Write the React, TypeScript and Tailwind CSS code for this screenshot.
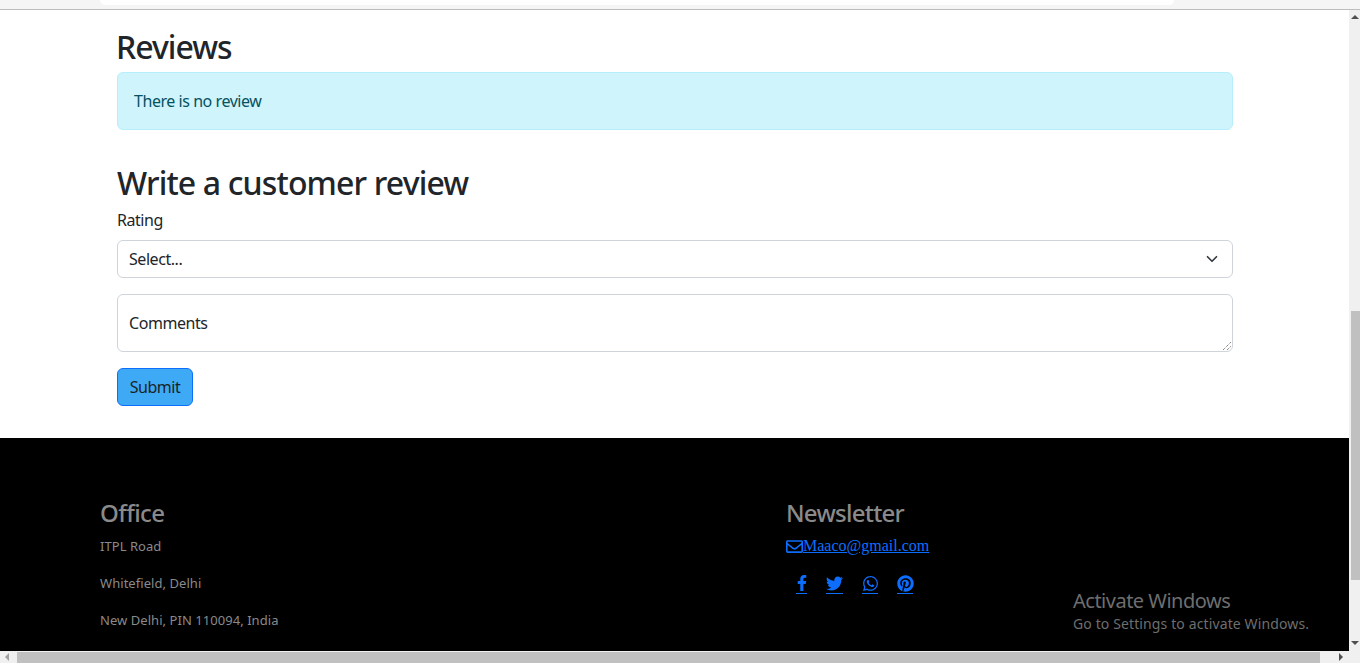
import React from "react"
import { ChevronDown } from "lucide-react"
import { FaFacebookF, FaPinterest, FaRegEnvelope, FaTwitter, FaWhatsapp } from "react-icons/fa"

const socials = [
    { icon: FaFacebookF, width: "w-[11px]", size: 16 },
    { icon: FaTwitter, width: "w-[17px]", size: 17 },
    { icon: FaWhatsapp, width: "w-[16px]", size: 17 },
    { icon: FaPinterest, width: "w-[16px]", size: 17 },
]

const BrowserBar = () => (
    <div className="h-[10px] shrink-0 bg-[#f5f5f5] border-b border-[#bdbdbd] pl-[100px] pr-[186px]">
        <div className="h-[5px] bg-white rounded-b-md" />
    </div>
)

const Reviews = () => (
    <div className="bg-white h-[428px] pl-[117px] pr-[116px] pt-[18px] text-[#212529] text-base tracking-[-0.45px]">
        <h2 className="text-[32px] leading-[38px] font-medium tracking-[-1px] -ml-px">Reviews</h2>
        <div className="mt-[6px] h-[58px] flex items-center px-4 bg-[#cff4fc] border border-[#b6effb] rounded-md text-[#055160]">
            There is no review
        </div>
        <h2 className="mt-[34px] text-[32px] leading-[38px] font-medium tracking-[-0.85px]">Write a customer review</h2>
        <div className="mt-[6px] leading-6">Rating</div>
        <div className="mt-2 h-[38px] flex items-center justify-between pl-[11px] pr-[11px] border border-[#ced4da] rounded-md">
            <span>Select...</span>
            <ChevronDown className="w-[18px] h-[18px] text-[#343a40]" strokeWidth={2.25} />
        </div>
        <div className="relative mt-4 h-[58px] flex items-center px-[11px] border border-[#ced4da] rounded-md">
            <span>Comments</span>
            <svg className="absolute right-0 bottom-0" width="10" height="10" viewBox="0 0 10 10">
                <path d="M1 9 9 1M5 9 9 5" stroke="#555" strokeWidth="1" strokeDasharray="1 1" />
            </svg>
        </div>
        <button className="mt-4 h-[38px] w-[76px] flex items-center justify-center bg-[#3eaaf5] border border-[#0d6efd] rounded-md text-[#1a1f24]">
            Submit
        </button>
    </div>
)

const Footer = () => (
    <div className="relative flex-1 bg-black pl-[100px] pt-[58px] overflow-hidden flex">
        <div className="w-[687px] text-[#8a8a8a]">
            <h4 className="text-2xl leading-[33px] font-medium tracking-[-0.6px]">Office</h4>
            <p className="mt-[7px] text-[13px] leading-5 tracking-[0.05px]">ITPL Road</p>
            <p className="mt-[17px] text-[13px] leading-5 tracking-[0.05px]">Whitefield, Delhi</p>
            <p className="mt-[17px] text-[13px] leading-5 tracking-[0.05px]">New Delhi, PIN 110094, India</p>
        </div>
        <div>
            <h4 className="text-2xl leading-[33px] font-medium tracking-[-0.75px] -ml-px text-[#8a8a8a]">Newsletter</h4>
            <a className="mt-[7px] flex items-center h-5 text-[#0d6efd] underline text-[16px] font-['Liberation_Serif',serif]">
                <FaRegEnvelope className="w-[17px] h-[17px] -ml-px shrink-0" />
                Maaco@gmail.com
            </a>
            <div className="mt-[19px] pl-[9px] flex items-center gap-[19px] text-[#0d6efd]">
                {socials.map((social, index) => (
                    <a key={index} className={`${social.width} flex flex-col items-center border-b border-[#0d6efd] h-[19px]`}>
                        <social.icon size={social.size} className="shrink-0" />
                    </a>
                ))}
            </div>
        </div>
        <div className="absolute left-[1073px] top-[151px] text-[#6e6e6e]">
            <div className="text-xl leading-6 tracking-[-0.5px]">Activate Windows</div>
            <div className="text-sm leading-5 mt-px tracking-[0.12px]">Go to Settings to activate Windows.</div>
        </div>
    </div>
)

const VerticalScrollbar = () => (
    <div className="w-[11px] shrink-0 bg-[#f0f0f0] flex flex-col items-center relative">
        <div className="mt-[5px] w-0 h-0 border-x-[4px] border-x-transparent border-b-[4px] border-b-[#505050]" />
        <div className="absolute top-[301px] left-[2px] w-[9px] h-[269px] bg-[#c0c0c0]" />
        <div className="absolute bottom-[6px] w-0 h-0 border-x-[4px] border-x-transparent border-t-[4px] border-t-[#505050]" />
    </div>
)

const HorizontalScrollbar = () => (
    <div className="h-[12px] shrink-0 bg-[#f0f0f0] flex items-center relative">
        <div className="ml-[5px] w-0 h-0 border-y-[4px] border-y-transparent border-r-[4px] border-r-[#a0a0a0]" />
        <div className="ml-2 w-[1303px] h-[11px] mt-px bg-[#c0c0c0]" />
        <div className="ml-[19px] w-0 h-0 border-y-[4px] border-y-transparent border-l-[4px] border-l-[#505050]" />
    </div>
)

export default function App() {
    return (
        <div className="w-[1360px] h-[663px] overflow-hidden flex flex-col font-['Noto_Sans',sans-serif] bg-white">
            <BrowserBar />
            <div className="flex-1 flex min-h-0">
                <div className="flex-1 flex flex-col min-w-0">
                    <Reviews />
                    <Footer />
                </div>
                <VerticalScrollbar />
            </div>
            <HorizontalScrollbar />
        </div>
    )
}
